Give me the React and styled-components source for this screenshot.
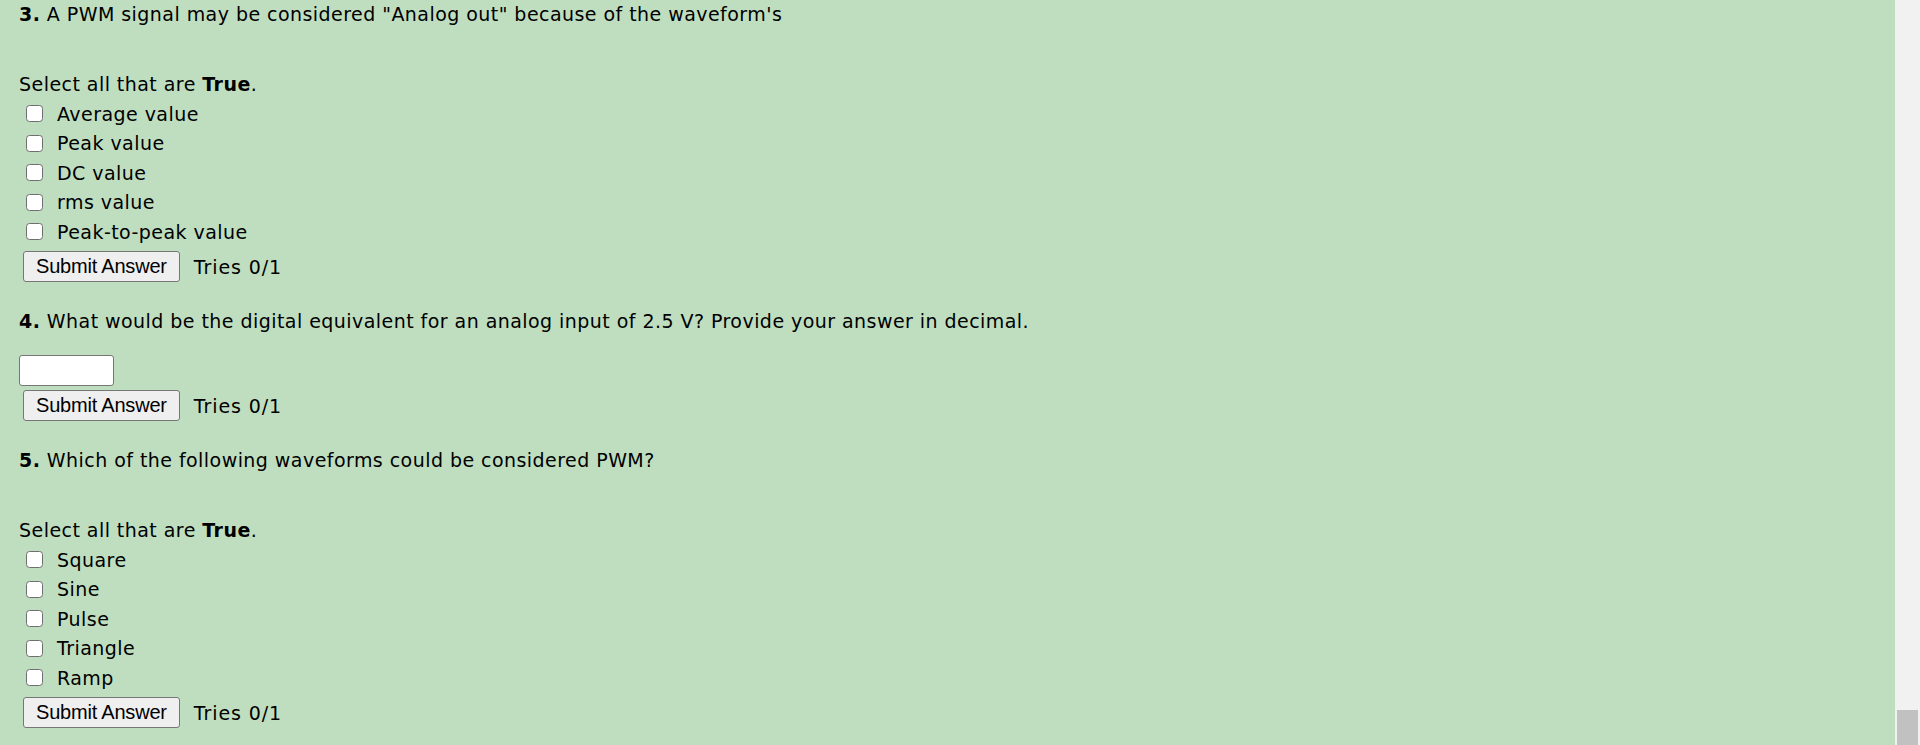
import React from 'react';
import styled, { createGlobalStyle } from 'styled-components';

const GlobalStyle = createGlobalStyle`
  html, body {
    margin: 0;
    padding: 0;
    overflow: hidden;
  }
  body {
    font-family: "DejaVu Sans", Verdana, sans-serif;
    color: #000;
  }
`;

const Page = styled.div`
  display: flex;
  width: 1920px;
  height: 745px;
  overflow: hidden;
`;

const Content = styled.main`
  flex: 1;
  background: #bfdebf;
  padding-left: 19px;
  font-size: 19px;
  letter-spacing: 0.45px;
`;

const Scrollbar = styled.div`
  width: 25px;
  background: #f1f1f1;
  display: flex;
  flex-direction: column;
  justify-content: flex-end;
  align-items: center;
`;

const Thumb = styled.div`
  width: 21px;
  height: 35px;
  background: #c1c1c1;
`;

const Question = styled.section`
  margin-top: ${({ $first }) => ($first ? '0' : '25px')};
`;

const Prompt = styled.div`
  line-height: 28px;
  white-space: nowrap;
`;

const Instruction = styled.div`
  margin-top: 43px;
  line-height: 27px;
`;

const Options = styled.div`
  margin-top: 1px;
`;

const Option = styled.label`
  display: flex;
  align-items: center;
  height: 29.5px;
`;

const Box = styled.input.attrs({ type: 'checkbox' })`
  appearance: none;
  margin: 0 14px 0 7px;
  width: 17px;
  height: 17px;
  box-sizing: border-box;
  border: 1.5px solid #6e6e6e;
  border-radius: 3.5px;
  background: #fff;
`;

const TextField = styled.input.attrs({ type: 'text' })`
  display: block;
  margin-top: 19.5px;
  width: 95px;
  height: 31px;
  box-sizing: border-box;
  border: 1px solid #767676;
  border-radius: 3px;
  background: #fff;
  padding: 0 4px;
`;

const SubmitRow = styled.div`
  display: flex;
  align-items: center;
  margin-top: 4.5px;
  height: 31px;
`;

const SubmitButton = styled.button`
  margin-left: 4px;
  height: 31px;
  padding: 0 12px;
  box-sizing: border-box;
  border: 1px solid #767676;
  border-radius: 3px;
  background: #efefef;
  font-family: "Liberation Sans", Arial, sans-serif;
  font-size: 20px;
  letter-spacing: -0.2px;
  color: #000;
`;

const Tries = styled.span`
  margin-left: 14px;
  letter-spacing: 0.9px;
`;

const Submit = () => (
  <SubmitRow>
    <SubmitButton>Submit Answer</SubmitButton>
    <Tries>Tries 0/1</Tries>
  </SubmitRow>
);

const CheckQuestion = ({ num, text, options, first }) => (
  <Question $first={first}>
    <Prompt>
      <b>{num}.</b> {text}
    </Prompt>
    <Instruction>
      Select all that are <b>True</b>.
    </Instruction>
    <Options>
      {options.map((o) => (
        <Option key={o}>
          <Box />
          {o}
        </Option>
      ))}
    </Options>
    <Submit />
  </Question>
);

export default function App() {
  return (
    <>
      <GlobalStyle />
      <Page>
        <Content>
          <CheckQuestion
            first
            num={3}
            text={'A PWM signal may be considered "Analog out" because of the waveform\'s'}
            options={['Average value', 'Peak value', 'DC value', 'rms value', 'Peak-to-peak value']}
          />
          <Question>
            <Prompt>
              <b>4.</b> What would be the digital equivalent for an analog input of 2.5 V? Provide your answer in decimal.
            </Prompt>
            <TextField />
            <Submit />
          </Question>
          <CheckQuestion
            num={5}
            text="Which of the following waveforms could be considered PWM?"
            options={['Square', 'Sine', 'Pulse', 'Triangle', 'Ramp']}
          />
        </Content>
        <Scrollbar>
          <Thumb />
        </Scrollbar>
      </Page>
    </>
  );
}
